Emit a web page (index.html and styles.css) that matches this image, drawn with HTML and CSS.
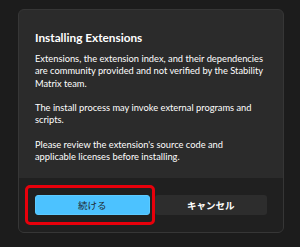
FILE: index.html
```html
<!DOCTYPE html>
<html lang="ja">
<head>
<meta charset="utf-8">
<link rel="stylesheet" href="styles.css">
</head>
<body>
<div class="dialog">
  <div class="content">
    <h1 class="title">Installing Extensions</h1>
    <p class="text">Extensions, the extension index, and their dependencies are community provided and not verified by the Stability Matrix team.</p>
    <p class="text">The install process may invoke external programs and scripts.</p>
    <p class="text">Please review the extension's source code and<br>applicable licenses before installing.</p>
  </div>
  <div class="footer">
    <button class="btn primary">続ける</button>
    <button class="btn secondary">キャンセル</button>
    <div class="highlight"></div>
  </div>
</div>
</body>
</html>
```
FILE: styles.css
```css
html, body {
  margin: 0;
  padding: 0;
  background: #1c1c1c;
  width: 300px;
  height: 247px;
  overflow: hidden;
}
body {
  font-family: "Lato", "Noto Sans CJK JP", sans-serif;
  color: #ffffff;
}
.dialog {
  margin: 9px 0 0 18px;
  width: 264px;
  height: 222px;
  background: #2b2b2b;
  border: 1px solid #363636;
  border-radius: 6px;
  overflow: hidden;
  display: flex;
  flex-direction: column;
}
.content {
  flex: 1;
  padding: 19px 12px 0 16px;
}
.title {
  margin: 0 0 7px 0;
  font-size: 11.8px;
  font-weight: 700;
  line-height: 17px;
}
.text {
  margin: 0 0 12.3px 0;
  font-size: 9.3px;
  line-height: 12.3px;
}
.footer {
  position: relative;
  height: 54px;
  flex: none;
  background: #202020;
  display: flex;
  gap: 5px;
  padding: 17px 16px 0 16px;
  box-sizing: border-box;
}
.btn {
  flex: 1;
  height: 20px;
  border: none;
  border-radius: 3px;
  font-family: "Noto Sans CJK JP", sans-serif;
  font-size: 9.5px;
  padding: 0;
}
.primary {
  background: #4cc2ff;
  color: #1e2a30;
  border: 1px solid #5ccaff;
}
.secondary {
  background: #2d2d2d;
  color: #ffffff;
  font-weight: 700;
}
.highlight {
  position: absolute;
  left: 6px;
  top: 7px;
  width: 124px;
  height: 34px;
  border: 3px solid #e8000b;
  border-radius: 5px;
}
```
